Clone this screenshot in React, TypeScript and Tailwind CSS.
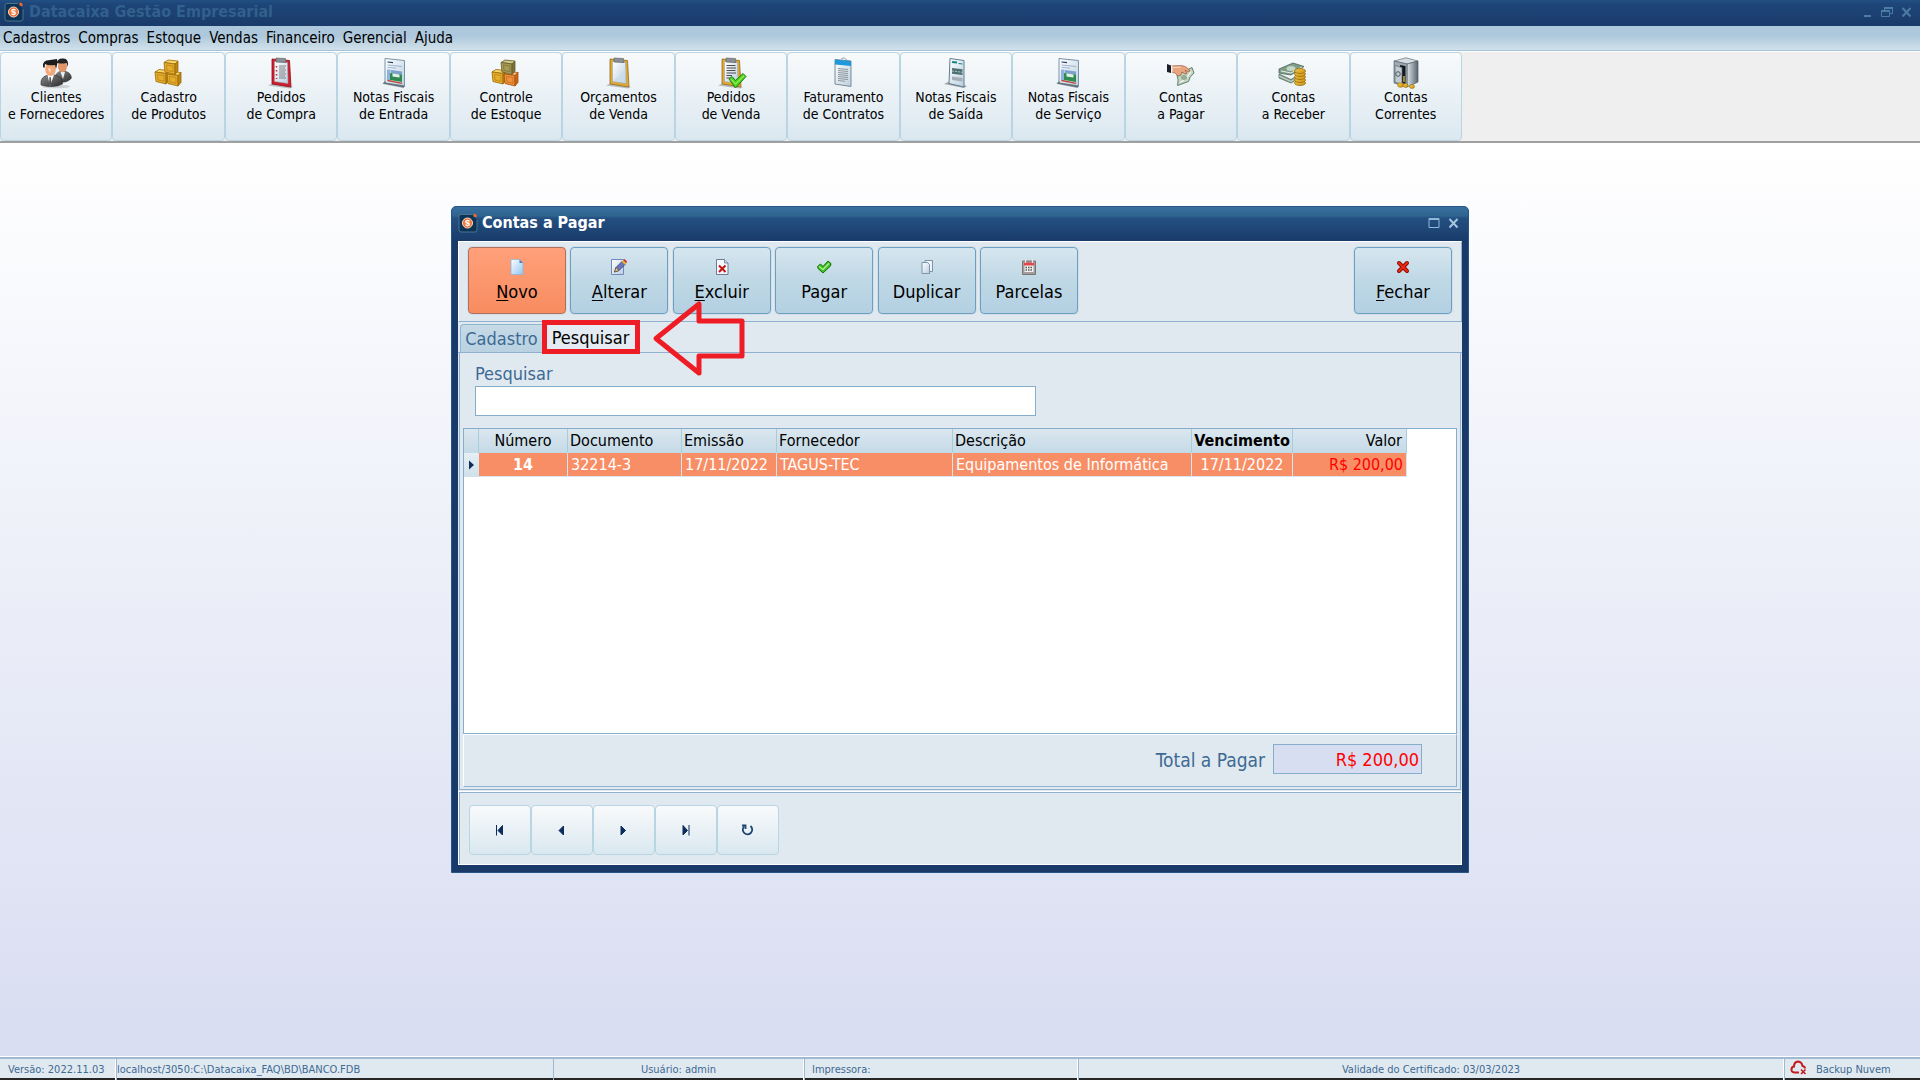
import React, { useState } from 'react';

const menus = ['Cadastros', 'Compras', 'Estoque', 'Vendas', 'Financeiro', 'Gerencial', 'Ajuda'];

// shared gradients used by the toolbar icons
function IconDefs() {
  return (
    <svg className="absolute h-0 w-0" aria-hidden="true">
      <defs>
        <linearGradient id="paper" x1="0" y1="0" x2="1" y2="1">
          <stop offset="0" stopColor="#ffffff" />
          <stop offset="1" stopColor="#b9cfe0" />
        </linearGradient>
        <linearGradient id="gold" x1="0" y1="0" x2="1" y2="1">
          <stop offset="0" stopColor="#f6cf50" />
          <stop offset="1" stopColor="#c98c10" />
        </linearGradient>
        <linearGradient id="steel" x1="0" y1="0" x2="1" y2="0">
          <stop offset="0" stopColor="#dfe6ea" />
          <stop offset="1" stopColor="#56626c" />
        </linearGradient>
        <linearGradient id="suit" x1="0" y1="0" x2="1" y2="1">
          <stop offset="0" stopColor="#8c8c8c" />
          <stop offset="1" stopColor="#2c2c2c" />
        </linearGradient>
        <linearGradient id="bluePage" x1="0" y1="0" x2="1" y2="1">
          <stop offset="0" stopColor="#ffffff" />
          <stop offset="1" stopColor="#92c6f2" />
        </linearGradient>
        <radialGradient id="orb">
          <stop offset="0" stopColor="#ffb080" />
          <stop offset="1" stopColor="#ec5a1c" />
        </radialGradient>
      </defs>
    </svg>
  );
}

function Icon32({ children }: { children: React.ReactNode }) {
  return <svg width="32" height="32" viewBox="0 0 32 32" aria-hidden="true">{children}</svg>;
}

function Icon16({ children }: { children: React.ReactNode }) {
  return <svg width="16" height="16" viewBox="0 0 16 16" aria-hidden="true">{children}</svg>;
}

function Logo() {
  return (
    <svg width="20" height="20" viewBox="0 0 20 20" aria-hidden="true">
      <path d="M14 1.500H3Q1 1.500 1 3.500V17Q1 19 3 19H17Q19 19 19 17V7" fill="#0d3355" stroke="#47748f" />
      <circle cx="9.500" cy="10" r="5" fill="url(#orb)" stroke="#ffe0cc" strokeWidth="1" />
      <path d="M11.500 8.200Q9.500 6.800 8 8Q7.200 9.400 9.500 10Q12 10.600 11 12Q9.500 13.200 7.500 11.800" fill="none" stroke="#fff" strokeWidth="1.300" />
      <path d="M15.500 0.500L18.500 1.500V4.500L15.500 3.500Z" fill="#f26a2a" />
    </svg>
  );
}

function Cube({ x, y, front, side, top, line }: { x: number; y: number; front: string; side: string; top: string; line: string }) {
  return (
    <g transform={`translate(${x} ${y})`} stroke={line} strokeWidth="0.800" strokeLinejoin="round">
      <path d="M0 3L4 0.500L14 1.500L11 4.500Z" fill={top} />
      <path d="M0 3L11 4.500V15L1 12.500Z" fill={front} />
      <path d="M11 4.500L14 1.500V11.500L11 15Z" fill={side} />
      <path d="M2.500 5.500L9 6.500V12.200L3 11Z" fill="none" strokeOpacity="0.600" />
    </g>
  );
}

function PeopleIcon() {
  return (
    <Icon32>
      <ellipse cx="16" cy="29.500" rx="14" ry="1.800" fill="#9a9a9a" opacity="0.400" />
      <path d="M15 24Q14 15 22 14Q31 14 31.500 21Q28 26 20 25Z" fill="url(#suit)" stroke="#333" strokeWidth="0.500" />
      <path d="M20.500 15L23 22L25 15Z" fill="#eee" />
      <ellipse cx="22.500" cy="9.500" rx="4.500" ry="5.800" fill="#e09668" />
      <path d="M16.500 7Q17 1 23 1.500Q29 1 28 10L26.500 6Q21 7 17.500 6Z" fill="#242424" />
      <path d="M1 28Q0 19 9 18H14Q23 19 22.500 27Q14 31.500 1 28Z" fill="url(#suit)" stroke="#292929" strokeWidth="0.600" />
      <path d="M7.500 18L10 29L14 18Z" fill="#fff" />
      <path d="M9.500 20L9 27L10.200 29L11.500 27L10.800 20Z" fill="#555" />
      <ellipse cx="10.500" cy="12" rx="5.300" ry="7" fill="#f2a878" />
      <path d="M8 12Q9 10 11 12L10 16Z" fill="#ffd9ba" />
      <path d="M3 10Q2 3 10 3L17 2Q18 7 16 12L15 8Q8 9 5 7L4.500 11Z" fill="#1d1d1d" />
    </Icon32>
  );
}

function BoxesIcon({ mixed }: { mixed?: boolean }) {
  const gold = { front: '#e5ad2c', side: '#bb850f', top: '#f7d66c', line: '#9c6a08' };
  return (
    <Icon32>
      <Cube x={2} y={12} {...gold} />
      {mixed
        ? <Cube x={14} y={14} front="#f0923a" side="#c8641a" top="#ffbd70" line="#a8500c" />
        : <Cube x={14} y={14} {...gold} />}
      {mixed
        ? <Cube x={11} y={2.5} front="#a79a55" side="#7d7137" top="#cfc68a" line="#665c28" />
        : <Cube x={11} y={2.5} {...gold} />}
    </Icon32>
  );
}

function ClipboardIcon({ kind }: { kind: 'red' | 'blank' | 'check' }) {
  const frame = kind === 'red' ? '#cf1f30' : '#dda93a';
  const edge = kind === 'red' ? '#8f0d1b' : '#96691a';
  return (
    <Icon32>
      <path d="M3 28.500L8 26L28 30L25 31.500Z" fill="#777" opacity="0.450" />
      <path d="M7 2L24.500 3.500L26 30L7 27Z" fill={frame} stroke={edge} strokeWidth="0.800" />
      <path d="M9.500 4.500L22.500 5.500L23 26.500L9.500 24.500Z" fill="url(#paper)" stroke="#9a9a9a" strokeWidth="0.500" />
      <path d="M11 1L20.500 1.500L21 5.500L11 5Z" fill="#8a8f96" stroke="#5b6066" strokeWidth="0.600" />
      {kind === 'red' && (
        <>
          <path d="M11.500 9V22" stroke="#d32f3a" strokeWidth="1.600" strokeDasharray="1.500 2.500" />
          <path d="M14 9H21M14 11H20M14 13H21M14 15H20M14 17H21M14 19H20M14 21H21" stroke="#777" strokeWidth="0.900" />
        </>
      )}
      {kind === 'blank' && <path d="M10 24L22.500 12V26Z" fill="#c8dbe9" opacity="0.700" />}
      {kind === 'check' && (
        <>
          <path d="M11.500 8.500H20.500M11.500 11H21M11.500 13.500H20.500M11.500 16H21M11.500 18.500H17M11.500 21H15" stroke="#4d4d4d" strokeWidth="1" />
          <path d="M14 22L17 19.500L20.500 23.500L28 16.500L31 19.500L20.500 31Z" fill="#4fd41a" stroke="#1b7d08" strokeWidth="1" strokeLinejoin="round" />
          <path d="M16 22.300L20.500 27L29 18.800" stroke="#b8f58f" strokeWidth="1" fill="none" />
        </>
      )}
    </Icon32>
  );
}

function InvoiceIcon() {
  return (
    <Icon32>
      <path d="M7 1.500L26.500 3.500V29L7 26Z" fill="url(#paper)" stroke="#7893a8" strokeWidth="1" />
      <path d="M7 24.500L5 26.500L25.500 30.500L26.500 29L7 26Z" fill="#6a7680" stroke="#56626b" strokeWidth="0.500" />
      <path d="M9.500 5L15 5.600" stroke="#2c3e66" strokeWidth="1.200" />
      <path d="M9.500 8L24 9.500M9.500 10.300L18 11.200" stroke="#8ba5c4" strokeWidth="0.800" />
      <path d="M9 12.500H12.500V24L9 23.500Z" fill="#8fb2dc" />
      <path d="M13 13L24 14.500V17.500L13 16Z" fill="#7c9fd0" />
      <path d="M12 16L24 17.500V25L12 23Z" fill="#2f8a52" />
      <path d="M14.500 16.500L21.500 17.500V20.500L14.500 19.500Z" fill="#e6f0ea" />
      <path d="M9.500 23.500L24 26.300" stroke="#c4473d" strokeWidth="1.300" />
    </Icon32>
  );
}

function ContractIcon() {
  return (
    <Icon32>
      <path d="M8 2.500L24 4V29.500L8 27Z" fill="url(#paper)" stroke="#7e8a94" strokeWidth="1" />
      <path d="M8 2.500L24 4V9L8 7.500Z" fill="#1f97dd" />
      <path d="M14 2L17 0.800L20 3" stroke="#9aa6b0" fill="none" />
      <path d="M11 11.500L21 12.500M11 13.500L21 14.500M11 15.500L21 16.500M11 17.500L21 18.500M11 19.500L21 20.500M11 21.500L21 22.500M11 23.500L18 24.300" stroke="#8d949b" strokeWidth="1" />
    </Icon32>
  );
}

function ReceiptIcon() {
  return (
    <Icon32>
      <path d="M4 27L10 24L27 29L24 31Z" fill="#666" opacity="0.550" />
      <path d="M10 1.500L24 3.500V30L9 26.500Z" fill="url(#paper)" stroke="#5d7f92" strokeWidth="1" />
      <path d="M12 5L17 5.600" stroke="#12877c" strokeWidth="2" />
      <path d="M18.500 6.500L22.500 7" stroke="#12877c" strokeWidth="1.200" />
      <path d="M12 11L22.500 12.300V18L12 16.800Z" fill="#4d706f" />
      <path d="M12 14L22.500 15.300" stroke="#d8e6e6" strokeWidth="0.700" strokeDasharray="2 1" />
      <path d="M12 19.500L22.500 21V24.500L12 23Z" fill="#a4adb2" />
    </Icon32>
  );
}

function PayIcon() {
  return (
    <Icon32>
      <path d="M12 18L27 10.500L29 16Q24 20 23.500 24.500L12.500 28.500Q14 23 12 18Z" fill="#c3d4c2" stroke="#61806a" strokeWidth="1" />
      <path d="M15 25.500Q21 23 26 14.500" stroke="#f4f8f3" strokeWidth="1.200" fill="none" />
      <ellipse cx="19" cy="20.500" rx="3" ry="2.500" fill="#93ad95" />
      <path d="M6 9L16 8.500Q22 9 25 14L23 15L20 13L22 16.500L20 17L17 15Q16 20 13 19L10 16L6 15Z" fill="#e7a580" stroke="#8d4b2f" strokeWidth="0.600" />
      <path d="M8 10.500L16 10" stroke="#ffd7be" strokeWidth="1.200" />
      <path d="M2 7L6 8.500V16L2 15Z" fill="#1c1f2a" />
      <path d="M6 8.500L7.500 9V15.500L6 16Z" fill="#f2f2f2" />
    </Icon32>
  );
}

function ReceiveIcon() {
  return (
    <Icon32>
      <path d="M2 17L14 22.500L26 15V19L14 26L2 21Z" fill="#8ba393" stroke="#4b6355" strokeWidth="0.700" />
      <path d="M2 19L14 24.500L26 17" stroke="#dfe9e0" strokeWidth="0.800" fill="none" />
      <path d="M2 12L16 6L27 9.500L14 18L2 16Z" fill="#7f9c87" stroke="#4b6355" strokeWidth="0.800" />
      <path d="M4 14L14 16L25 10" stroke="#e4eee4" strokeWidth="1" fill="none" />
      <ellipse cx="14" cy="11.500" rx="4.500" ry="2.500" fill="#c5d6c5" />
      {[26, 23, 20, 17, 14].map((cy) => (
        <ellipse key={cy} cx="23" cy={cy} rx="5.500" ry="2.500" fill="url(#gold)" stroke="#99700c" strokeWidth="0.800" />
      ))}
    </Icon32>
  );
}

function SafeIcon() {
  return (
    <Icon32>
      <path d="M4 4L16 0.800L28 4L17 7Z" fill="#d5dde2" stroke="#66727c" strokeWidth="0.700" />
      <path d="M17 7L28 4V25L17 30Z" fill="url(#steel)" stroke="#505b64" strokeWidth="0.700" />
      <path d="M4 4L17 7V30L4 26Z" fill="#9fabb4" stroke="#5a656e" strokeWidth="0.700" />
      <path d="M10 8L15.500 9V27L10 26Z" fill="#15191c" />
      <path d="M5 8.500L12 10.500V27.500L5 25Z" fill="#c1cbd2" stroke="#5d6971" strokeWidth="0.700" />
      <circle cx="8" cy="17" r="2.300" fill="none" stroke="#4c5860" strokeWidth="1" />
      <path d="M14 19V25" stroke="#e9c13c" strokeWidth="1.300" />
      <ellipse cx="10.500" cy="28" rx="3" ry="2.300" fill="url(#gold)" stroke="#99700c" strokeWidth="0.600" />
      <ellipse cx="15.500" cy="28.500" rx="2.500" ry="2" fill="url(#gold)" stroke="#99700c" strokeWidth="0.600" />
      <ellipse cx="22" cy="29.500" rx="2.500" ry="2" fill="url(#gold)" stroke="#99700c" strokeWidth="0.600" />
    </Icon32>
  );
}

const shortcuts = [
  { top: 'Clientes', bottom: 'e Fornecedores', icon: <PeopleIcon /> },
  { top: 'Cadastro', bottom: 'de Produtos', icon: <BoxesIcon /> },
  { top: 'Pedidos', bottom: 'de Compra', icon: <ClipboardIcon kind="red" /> },
  { top: 'Notas Fiscais', bottom: 'de Entrada', icon: <InvoiceIcon /> },
  { top: 'Controle', bottom: 'de Estoque', icon: <BoxesIcon mixed /> },
  { top: 'Orçamentos', bottom: 'de Venda', icon: <ClipboardIcon kind="blank" /> },
  { top: 'Pedidos', bottom: 'de Venda', icon: <ClipboardIcon kind="check" /> },
  { top: 'Faturamento', bottom: 'de Contratos', icon: <ContractIcon /> },
  { top: 'Notas Fiscais', bottom: 'de Saída', icon: <ReceiptIcon /> },
  { top: 'Notas Fiscais', bottom: 'de Serviço', icon: <InvoiceIcon /> },
  { top: 'Contas', bottom: 'a Pagar', icon: <PayIcon /> },
  { top: 'Contas', bottom: 'a Receber', icon: <ReceiveIcon /> },
  { top: 'Contas', bottom: 'Correntes', icon: <SafeIcon /> },
];

const actions = [
  {
    key: 'N', rest: 'ovo', active: true,
    icon: (
      <Icon16>
        <path d="M2 0.500H10.500L14 4V15.500H2Z" fill="url(#bluePage)" stroke="#8fb4d8" strokeWidth="0.800" />
        <path d="M10.500 0.500V4H14Z" fill="#4a7fc0" />
      </Icon16>
    ),
  },
  {
    key: 'A', rest: 'lterar',
    icon: (
      <Icon16>
        <path d="M0.500 0.500H12.500V15.500H0.500Z" fill="url(#paper)" stroke="#7288bb" />
        <path d="M3.500 13L5 8.500L11.500 2L14.500 5L8 11.500Z" fill="#6a76b8" stroke="#353d73" strokeWidth="0.800" />
        <path d="M3.500 13L5 8.500L8 11.500Z" fill="#e8c88c" stroke="#4b4220" strokeWidth="0.600" />
        <path d="M10.800 2.700L12.300 1.200L15.300 4.200L13.800 5.700Z" fill="#e8b62c" />
        <path d="M12.300 1.200L13.500 0L16 2.500L15.300 4.200Z" fill="#cc2a1e" />
      </Icon16>
    ),
  },
  {
    key: 'E', rest: 'xcluir',
    icon: (
      <Icon16>
        <path d="M2.500 0.500H10.500L14 4V15.500H2.500Z" fill="#f5f8fc" stroke="#6a7c95" />
        <path d="M10.500 0.500V4H14" fill="#ccd8e8" stroke="#6a7c95" strokeWidth="0.800" />
        <path d="M5 6.500L11.500 13M11.500 6.500L5 13" stroke="#c2160f" strokeWidth="2" />
      </Icon16>
    ),
  },
  {
    key: '', rest: 'Pagar',
    icon: (
      <Icon16>
        <path d="M1.500 7.500L4.500 5L7 7.500L12 2L15 4.500L14.500 7L7 14L2 9.500Z" fill="#3fbf1c" stroke="#14720a" strokeLinejoin="round" />
        <path d="M3 7.500L7 10.500L13 4.500" stroke="#b4f29a" strokeWidth="1.300" fill="none" />
      </Icon16>
    ),
  },
  {
    key: '', rest: 'Duplicar',
    icon: (
      <Icon16>
        <path d="M6 1.500H13.500V12.500H6Z" fill="#eef4f9" stroke="#7d93a6" />
        <path d="M3 3.500H8.500L10.500 5.500V14.500H3Z" fill="url(#paper)" stroke="#7d93a6" />
      </Icon16>
    ),
  },
  {
    key: '', rest: 'Parcelas',
    icon: (
      <Icon16>
        <path d="M1.500 2H14.500V15.500H1.500Z" fill="#a39d9d" stroke="#7a7474" />
        <path d="M3.500 6H12.500V13H3.500Z" fill="#f1f1f1" />
        <path d="M3 3.500H13V6.500H3Z" fill="#e2484b" />
        <path d="M4.500 0V4M11.500 0V4" stroke="#e6e6e6" strokeWidth="1.300" />
        <path d="M4.500 8.500H12M4.500 11H12" stroke="#565656" strokeWidth="1.300" strokeDasharray="1.500 1" />
      </Icon16>
    ),
  },
];

const navIcons = [
  { label: 'Primeiro', path: <path d="M4.500 3V13.500M10.500 3.500V13L6 8.500Z" /> },
  { label: 'Anterior', path: <path d="M9.500 4V13L5 8.500Z" /> },
  { label: 'Próximo', path: <path d="M5 4V13L9.500 8.500Z" /> },
  { label: 'Último', path: <path d="M11 3V13.500M5 3.500V13L9.500 8.500Z" /> },
];

const bill = {
  numero: '14',
  documento: '32214-3',
  emissao: '17/11/2022',
  fornecedor: 'TAGUS-TEC',
  descricao: 'Equipamentos de Informática',
  vencimento: '17/11/2022',
  valor: 'R$ 200,00',
};

const headCell = 'h-6 border-r border-[#a9cbdc] px-[2px] font-normal whitespace-nowrap';
const bodyCell = 'h-6 border-r border-b border-[#d8e6f0] bg-[#f88e65] px-[3px] whitespace-nowrap';

function ActionButton({ item }: { item: any }) {
  return (
    <button
      type="button"
      className={`flex h-[67px] w-[98px] flex-col items-center rounded-[4px] border pt-[11px] text-[18px] leading-[22px] text-black shadow-[0_0_0_1px_#d3dfe8] ${
        item.active
          ? 'border-[#b0705c] bg-gradient-to-b from-[#ffa07a] to-[#f88c60]'
          : 'border-[#6d9fc1] bg-gradient-to-b from-[#d6e6ef] via-[#bfd8e5] to-[#b3d0e2]'
      }`}
    >
      {item.icon}
      <span className="mt-[6px]">
        {item.key && <span className="underline underline-offset-2">{item.key}</span>}
        {item.rest}
      </span>
    </button>
  );
}

function ContasPagarWindow() {
  const [tab, setTab] = useState('pesquisar');
  const [search, setSearch] = useState('');

  return (
    <section className="w-full max-w-[1018px] self-start rounded-t-[5px] border border-[#275585] bg-[#193a68] px-[6px] pb-[7px]" aria-label="Contas a Pagar">
      <header className="-mx-[6px] flex h-[34px] items-center rounded-t-[4px] bg-[linear-gradient(#39709f_0px,#2f6390_9px,#245081_11px,#193b6a_34px)] px-[6px] pb-[2px]">
        <Logo />
        <h1 className="ml-1 flex-1 text-[16px] font-bold text-white">Contas a Pagar</h1>
        <button type="button" aria-label="Maximizar" className="mr-2 text-[#8fb9d6]">
          <svg width="12" height="12" viewBox="0 0 12 12"><path d="M1 1.500H11V10.500H1Z" fill="none" stroke="currentColor" /><path d="M1 2H11" stroke="currentColor" strokeWidth="2" /></svg>
        </button>
        <button type="button" aria-label="Fechar janela" className="mr-[3px] text-[#a3c6de]">
          <svg width="11" height="11" viewBox="0 0 11 11"><path d="M1.500 1L9.500 9.500M9.500 1L1.500 9.500" stroke="currentColor" strokeWidth="2" /></svg>
        </button>
      </header>

      <div className="bg-[#e1e9f0]">
        <div className="flex items-start justify-between border border-t-white border-r-[#8fb0cf] border-b-[#8fb0cf] border-l-white pt-[5px] pr-[9px] pb-[7px] pl-[9px]">
          <div className="flex w-[610px] justify-between">
            {actions.map((item) => <ActionButton key={item.rest} item={item} />)}
          </div>
          <ActionButton
            item={{
              key: 'F', rest: 'echar',
              icon: <Icon16><path d="M4 4L12 12M12 4L4 12" stroke="#8e0d04" strokeWidth="4" strokeLinecap="round" /><path d="M4 4L12 12M12 4L4 12" stroke="#ee2a10" strokeWidth="2" strokeLinecap="round" /></Icon16>,
            }}
          />
        </div>

        <div role="tablist" className="relative flex h-[31px] items-end border-b border-[#8fb0cf] pl-[2px] text-[18px] leading-[26px]">
          <button
            type="button"
            role="tab"
            aria-selected={tab === 'cadastro'}
            onClick={() => setTab('cadastro')}
            className="h-7 w-[82px] rounded-tl-[4px] border border-r-0 border-b-0 border-[#8fb5cf] bg-gradient-to-b from-[#c6dae7] to-[#b9d1e1] text-[#3d6a94]"
          >
            Cadastro
          </button>
          <button
            type="button"
            role="tab"
            aria-selected={tab === 'pesquisar'}
            onClick={() => setTab('pesquisar')}
            className="h-7 w-[97px] bg-[#e4ebf2] text-black"
          >
            Pesquisar
          </button>
          <div className="pointer-events-none absolute -top-[2px] left-[84px] h-[34px] w-[98px] border-[5px] border-[#ee1c24]" />
          <svg className="pointer-events-none absolute -top-[22px] left-[194px]" width="94" height="78" viewBox="0 0 94 78" aria-hidden="true">
            <path d="M4 38.500L47 4V21H90V56H47V73Z" fill="none" stroke="#ee1c24" strokeWidth="5" strokeLinejoin="round" />
          </svg>
        </div>

        <div className="mx-px border-x border-b border-[#8fb0cf] px-[3px] pb-[2px]">
          <div className="px-3 pt-[9px] pb-3">
            <label htmlFor="pesquisar" className="block text-[18px] leading-6 text-[#3d6a94]">Pesquisar</label>
            <input
              id="pesquisar"
              type="text"
              value={search}
              onChange={(e) => setSearch(e.target.value)}
              className="block h-[30px] w-full max-w-[561px] border border-[#85aecb] bg-white px-2 text-[18px] outline-none"
            />
          </div>

          <div className="min-h-[306px] border border-[#85aecb] bg-white">
            <table className="w-[943px] table-fixed border-separate border-spacing-0 text-[16px] leading-[20px]">
              <colgroup>
                <col className="w-[15px]" />
                <col className="w-[89px]" />
                <col className="w-[114px]" />
                <col className="w-[95px]" />
                <col className="w-[176px]" />
                <col className="w-[239px]" />
                <col className="w-[101px]" />
                <col className="w-[114px]" />
              </colgroup>
              <thead>
                <tr className="bg-gradient-to-b from-[#dbe7ef] to-[#c4dae7] text-left text-black">
                  <th className={headCell}></th>
                  <th className={`${headCell} text-center`}>Número</th>
                  <th className={headCell}>Documento</th>
                  <th className={headCell}>Emissão</th>
                  <th className={headCell}>Fornecedor</th>
                  <th className={headCell}>Descrição</th>
                  <th className="h-6 border-r border-[#a9cbdc] text-center font-bold whitespace-nowrap">Vencimento</th>
                  <th className={`${headCell} pr-1 text-right`}>Valor</th>
                </tr>
              </thead>
              <tbody>
                <tr className="text-white">
                  <td className="bg-gradient-to-b from-[#e6f0f5] to-[#cfe0ea]">
                    <svg className="ml-[4px]" width="8" height="10" viewBox="0 0 8 10" aria-hidden="true"><path d="M1 0.500L6 5L1 9.500Z" fill="#0c2c5c" /></svg>
                  </td>
                  <td className={`${bodyCell} text-center font-bold`}>{bill.numero}</td>
                  <td className={bodyCell}>{bill.documento}</td>
                  <td className={bodyCell}>{bill.emissao}</td>
                  <td className={bodyCell}>{bill.fornecedor}</td>
                  <td className={bodyCell}>{bill.descricao}</td>
                  <td className={`${bodyCell} text-center`}>{bill.vencimento}</td>
                  <td className={`${bodyCell} text-right text-[#ff0000]`}>{bill.valor}</td>
                </tr>
              </tbody>
            </table>
          </div>

          <div className="flex items-start justify-end gap-2 border border-t-white border-r-[#8fb0cf] border-b-[#8fb0cf] border-l-white pt-[9px] pr-[34px] pb-3">
            <label htmlFor="total" className="pt-1 text-[19px] leading-6 text-[#3d6a94]">Total a Pagar</label>
            <input
              id="total"
              type="text"
              readOnly
              value={bill.valor}
              className="h-[30px] w-[149px] border border-[#85aecb] bg-[#d8def1] pr-[2px] text-right text-[18px] text-[#ff0000] outline-none"
            />
          </div>
        </div>

        <div className="mt-px border border-white">
          <nav className="flex border-t border-l border-[#8fb0cf] pt-3 pb-[9px] pl-[9px]" aria-label="Registros">
            {navIcons.map((n) => (
              <button key={n.label} type="button" aria-label={n.label} className="flex h-[50px] w-[62px] items-center justify-center rounded-[4px] border border-[#b7d6e4] bg-gradient-to-b from-[#f8fafb] to-[#dae8f0]">
                <svg width="16" height="16" viewBox="0 0 16 16" fill="#0c2c5c" stroke="#0c2c5c" strokeWidth="1">{n.path}</svg>
              </button>
            ))}
            <button type="button" aria-label="Atualizar" className="flex h-[50px] w-[62px] items-center justify-center rounded-[4px] border border-[#b7d6e4] bg-gradient-to-b from-[#f8fafb] to-[#dae8f0]">
              <svg width="16" height="16" viewBox="0 0 16 16" fill="none" stroke="#1d4470" strokeWidth="1.800">
                <path d="M4 4.500A4.700 4.700 0 1 0 10.500 4" />
                <path d="M2 3.500H5.500V7" />
              </svg>
            </button>
          </nav>
        </div>
      </div>
    </section>
  );
}

export default function App() {
  return (
    <div className="flex min-h-screen flex-col bg-white font-['DejaVu_Sans_Condensed','DejaVu_Sans',sans-serif]">
      <IconDefs />
      <header className="flex h-[26px] items-center bg-[linear-gradient(#225083_0px,#1e4678_4px,#193a6a_26px)] pr-2 pb-[2px] pl-1">
        <Logo />
        <span className="ml-[5px] flex-1 text-[16px] leading-[22px] font-bold text-[#31608c]">Datacaixa Gestão Empresarial</span>
        <div className="flex items-center gap-2 text-[#4c7ba3]">
          <button type="button" aria-label="Minimizar">
            <svg width="11" height="12" viewBox="0 0 11 12"><path d="M2 10H9" stroke="currentColor" strokeWidth="2" /></svg>
          </button>
          <button type="button" aria-label="Restaurar">
            <svg width="12" height="12" viewBox="0 0 12 12" fill="none" stroke="currentColor"><path d="M3.500 4V2.500H11.500V7.500H9" /><path d="M3 2H12M0 5H9" strokeWidth="2" /><path d="M0.500 5V10.500H8.500V5" /></svg>
          </button>
          <button type="button" aria-label="Fechar">
            <svg width="11" height="12" viewBox="0 0 11 12"><path d="M1.500 2L9.500 10.500M9.500 2L1.500 10.500" stroke="currentColor" strokeWidth="2" /></svg>
          </button>
        </div>
      </header>

      <nav className="flex h-[25px] items-center gap-2 border-b border-[#a3c4da] bg-[linear-gradient(#adc8dc_0px,#adc8dc_10px,#d2e1ea_24px)] pl-[3px] text-[15px] leading-[20px] text-black" aria-label="Menu principal">
        {menus.map((m) => <button key={m} type="button">{m}</button>)}
      </nav>

      <div className="border-t border-b-2 border-t-white border-b-[#a0a0a0] bg-[#efefef]">
        <div className="grid w-full max-w-[1462px] grid-cols-13">
          {shortcuts.map((s) => (
            <button
              key={s.top + s.bottom}
              type="button"
              className="flex h-[89px] flex-col items-center rounded-[4px] border border-[#b9d5e4] bg-gradient-to-b from-[#f8fafb] to-[#dbe8f0] pt-1 text-[14px] leading-[17px] whitespace-nowrap text-black"
            >
              {s.icon}
              <span>{s.top}</span>
              <span>{s.bottom}</span>
            </button>
          ))}
        </div>
      </div>

      <main className="flex flex-1 justify-center bg-gradient-to-b from-white to-[#d8ddf1] pt-[63px]">
        <ContasPagarWindow />
      </main>

      <footer className="border-t border-b-2 border-t-white border-b-[#262626] text-[11px] leading-[20px] text-[#3d6a94]">
        <div className="grid h-[21px] grid-cols-[116px_437px_251px_274px_1fr_136px] border-t-2 border-[#a0b8d2] bg-[#e1e9f0] whitespace-nowrap">
          <span className="border-r border-white pt-px pl-2">Versão: 2022.11.03</span>
          <span className="border-l border-[#a0b8d2] pt-px">localhost/3050:C:\Datacaixa_FAQ\BD\BANCO.FDB</span>
          <span className="border-x border-l-[#a0b8d2] border-r-white pt-px text-center">Usuário: admin</span>
          <span className="border-x border-l-[#a0b8d2] border-r-white pt-px pl-[7px]">Impressora:</span>
          <span className="border-x border-l-[#a0b8d2] border-r-white pt-px text-center">Validade do Certificado: 03/03/2023</span>
          <span className="flex border-l border-[#a0b8d2] pt-px pl-[5px]">
            <svg className="mr-[9px]" width="17" height="16" viewBox="0 0 17 16" fill="none" stroke="#c41c1c" strokeWidth="2" aria-hidden="true">
              <path d="M9 12.500H4.500Q1 12 1.500 9Q2 6.500 4 6.500Q4 2 8 1.500Q12 2 12.500 6Q15 6.500 15 8.500" />
              <path d="M11 9.500L15.500 14M15.500 9.500L11 14" strokeWidth="1.600" />
            </svg>
            Backup Nuvem
          </span>
        </div>
      </footer>
    </div>
  );
}
